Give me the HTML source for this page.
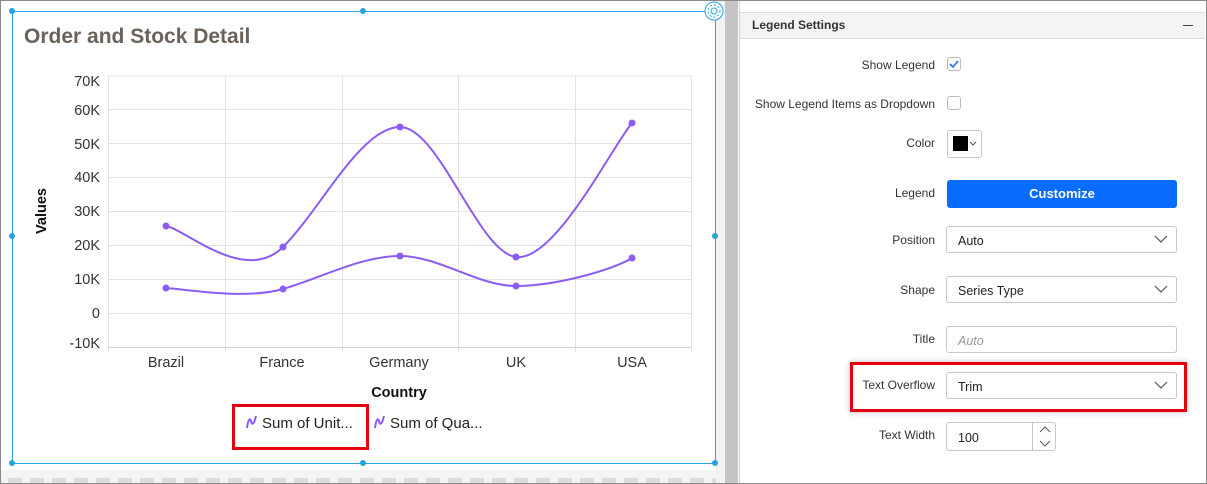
<!DOCTYPE html>
<html><head><style>
*{box-sizing:border-box;margin:0;padding:0}
body{width:1207px;height:484px;overflow:hidden;background:#fff;font-family:"Liberation Sans",sans-serif;position:relative}
.abs{position:absolute}
.lbl{position:absolute;right:272px;font-size:12px;color:#333;text-align:right;white-space:nowrap}
.ctl{position:absolute;left:946px;width:231px;height:27px;border:1px solid #c8c8c8;border-radius:3px;background:#fff;font-size:12.5px;color:#222;padding:7px 0 0 11px}
.chev{position:absolute;right:8px;top:7px}
</style></head><body>
<div class="abs" style="left:716px;top:0;width:9px;height:484px;background:#f2f2f2"></div>
<div class="abs" style="left:725px;top:0;width:13px;height:484px;background:#c4c4c4"></div>
<div class="abs" style="left:0;top:470px;width:716px;height:14px;background:#f4f4f4"></div>
<div class="abs" style="left:8px;top:478px;width:708px;height:5px;background:repeating-linear-gradient(90deg,#dcdcdc 0 14px,transparent 14px 22px)"></div>
<div class="abs" style="left:12px;top:11px;width:704px;height:453px;border:1px solid #29a3dc;background:#fff"></div>
<svg class="abs" style="left:0;top:0" width="730" height="484">
<g fill="#29a3dc"><circle cx="12" cy="11" r="3"/><circle cx="363" cy="11" r="3"/><circle cx="12" cy="236" r="3"/><circle cx="715" cy="236" r="3"/><circle cx="12" cy="463" r="3"/><circle cx="363" cy="463" r="3"/><circle cx="715" cy="463" r="3"/></g>
<circle cx="714" cy="11" r="9" fill="#fff" stroke="#29a3dc"/>
<circle cx="714" cy="11" r="3" fill="none" stroke="#29a3dc"/>
<circle cx="714" cy="11" r="6" fill="none" stroke="#29a3dc" stroke-dasharray="2 2"/>
<text x="24" y="43" font-size="21" font-weight="bold" fill="#6b625a" font-family="Liberation Sans">Order and Stock Detail</text>
<g stroke="#e3e3e3" stroke-width="1">
<line x1="108" y1="76" x2="691" y2="76"/><line x1="108" y1="109.5" x2="691" y2="109.5"/><line x1="108" y1="143.5" x2="691" y2="143.5"/><line x1="108" y1="177.5" x2="691" y2="177.5"/><line x1="108" y1="211.5" x2="691" y2="211.5"/><line x1="108" y1="245.5" x2="691" y2="245.5"/><line x1="108" y1="279.5" x2="691" y2="279.5"/><line x1="108" y1="313.5" x2="691" y2="313.5"/>
<line x1="108.5" y1="76" x2="108.5" y2="352"/><line x1="225.5" y1="76" x2="225.5" y2="352"/><line x1="342.5" y1="76" x2="342.5" y2="352"/><line x1="458.5" y1="76" x2="458.5" y2="352"/><line x1="575.5" y1="76" x2="575.5" y2="352"/><line x1="691.5" y1="76" x2="691.5" y2="352"/>
<line x1="108" y1="347.5" x2="691" y2="347.5" stroke="#d0d0d0"/>
</g>
<g font-size="14.5" fill="#333" text-anchor="end" font-family="Liberation Sans">
<text x="100" y="86">70K</text><text x="100" y="115">60K</text><text x="100" y="149">50K</text><text x="100" y="182">40K</text><text x="100" y="216">30K</text><text x="100" y="250">20K</text><text x="100" y="284">10K</text><text x="100" y="318">0</text><text x="100" y="348">-10K</text>
</g>
<g font-size="14.5" fill="#333" text-anchor="middle" font-family="Liberation Sans">
<text x="166" y="367">Brazil</text><text x="282" y="367">France</text><text x="399" y="367">Germany</text><text x="516" y="367">UK</text><text x="632" y="367">USA</text>
</g>
<text x="399" y="397" font-size="14.5" font-weight="bold" text-anchor="middle" fill="#111">Country</text>
<text transform="translate(46,211) rotate(-90)" font-size="14.5" font-weight="bold" text-anchor="middle" fill="#111">Values</text>
<g fill="none" stroke="#8b5cf6" stroke-width="2">
<path d="M166,226 C185,229 245,285 283,247 C321,209 361,127 400,127 C439,127 478,252 516,257 C555,262 613,145 632,123"/>
<path d="M166,288 C185,289 245,300 283,289 C321,278 361,256 400,256 C439,256 478,286 516,286 C555,286 613,270 632,258"/>
</g>
<g fill="#8b5cf6"><circle cx="166" cy="226" r="3.5"/><circle cx="283" cy="247" r="3.5"/><circle cx="400" cy="127" r="3.5"/><circle cx="516" cy="257" r="3.5"/><circle cx="632" cy="123" r="3.5"/>
<circle cx="166" cy="288" r="3.5"/><circle cx="283" cy="289" r="3.5"/><circle cx="400" cy="256" r="3.5"/><circle cx="516" cy="286" r="3.5"/><circle cx="632" cy="258" r="3.5"/></g>
<rect x="233.5" y="405.5" width="134" height="43" fill="none" stroke="#e3000f" stroke-width="3"/>
<path d="M247,428 C248,420 250,417 251,421 C252,426 254,424 256,416" fill="none" stroke="#8b5cf6" stroke-width="2"/>
<text x="262" y="428" font-size="15" fill="#222">Sum of Unit...</text>
<path d="M375,428 C376,420 378,417 379,421 C380,426 382,424 384,416" fill="none" stroke="#8b5cf6" stroke-width="2"/>
<text x="390" y="428" font-size="15" fill="#222">Sum of Qua...</text>
</svg>
<div class="abs" style="left:739px;top:0;width:468px;height:484px;background:#fff;border-left:1px solid #cfcfcf"></div>
<div class="abs" style="left:740px;top:12px;width:465px;height:27px;background:#f4f4f4;border-top:1px solid #ddd;border-bottom:1px solid #ddd"></div>
<div class="abs" style="left:752px;top:18px;font-size:12px;font-weight:bold;color:#333">Legend Settings</div>
<div class="abs" style="left:1183px;top:25px;width:10px;height:1px;background:#444"></div>
<div class="lbl" style="top:58px">Show Legend</div>
<div class="abs" style="left:947px;top:57px;width:14px;height:14px;border:1px solid #bbb;border-radius:3px"></div>
<svg class="abs" style="left:947px;top:57px" width="14" height="14"><path d="M3,7 L6,10 L11,4" fill="none" stroke="#1a6fe8" stroke-width="1.6"/></svg>
<div class="lbl" style="top:97px">Show Legend Items as Dropdown</div>
<div class="abs" style="left:947px;top:96px;width:14px;height:14px;border:1px solid #bbb;border-radius:3px"></div>
<div class="lbl" style="top:136px">Color</div>
<div class="abs" style="left:947px;top:130px;width:35px;height:28px;border:1px solid #c8c8c8;border-radius:3px"></div>
<div class="abs" style="left:953px;top:136px;width:15px;height:15px;background:#000"></div>
<svg class="abs" style="left:969px;top:141px" width="8" height="6"><path d="M1,1 L4,4 L7,1" fill="none" stroke="#555"/></svg>
<div class="lbl" style="top:186px">Legend</div>
<div class="abs" style="left:947px;top:180px;width:230px;height:28px;background:#0a6cff;border-radius:3px;color:#fff;font-size:13px;font-weight:bold;text-align:center;line-height:28px">Customize</div>
<div class="lbl" style="top:233px">Position</div>
<div class="ctl" style="top:226px">Auto<svg class="chev" width="14" height="10"><path d="M1,2 L7,8 L13,2" fill="none" stroke="#555" stroke-width="1.2"/></svg></div>
<div class="lbl" style="top:283px">Shape</div>
<div class="ctl" style="top:276px">Series Type<svg class="chev" width="14" height="10"><path d="M1,2 L7,8 L13,2" fill="none" stroke="#555" stroke-width="1.2"/></svg></div>
<div class="lbl" style="top:332px">Title</div>
<div class="ctl" style="top:326px;color:#999;font-style:italic">Auto</div>
<div class="lbl" style="top:378px">Text Overflow</div>
<div class="ctl" style="top:372px">Trim<svg class="chev" width="14" height="10"><path d="M1,2 L7,8 L13,2" fill="none" stroke="#555" stroke-width="1.2"/></svg></div>
<div class="abs" style="left:850px;top:362px;width:337px;height:50px;border:3px solid #e3000f;box-shadow:0 0 6px rgba(0,0,0,.25)"></div>
<div class="lbl" style="top:428px">Text Width</div>
<div class="ctl" style="top:422px;width:110px;height:29px;padding-top:8px">100</div>
<div class="abs" style="left:1032px;top:423px;width:1px;height:27px;background:#c8c8c8"></div>
<svg class="abs" style="left:1038px;top:426px" width="14" height="22"><path d="M2,6 L7,1 L12,6 M2,15 L7,20 L12,15" fill="none" stroke="#555"/></svg>
<div class="abs" style="left:0;top:0;width:1207px;height:484px;border:1px solid #8a8a8a;pointer-events:none"></div>
</body></html>
